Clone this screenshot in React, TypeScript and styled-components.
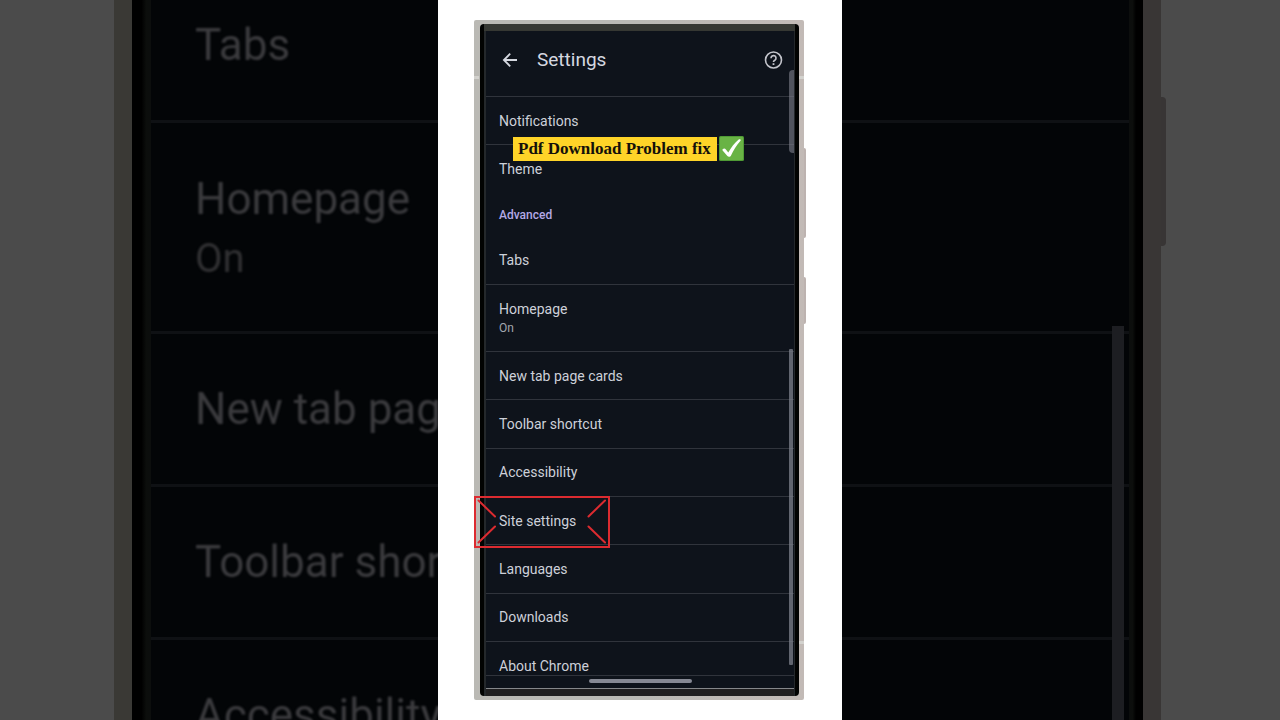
import React from "react";
import styled, { createGlobalStyle } from "styled-components";

const sans = `Roboto, "Liberation Sans", sans-serif`;

const GlobalStyle = createGlobalStyle`
  *, *::before, *::after { box-sizing: border-box; }
  body { margin: 0; background: #4b4b4b; font-family: ${sans}; }
  ul, h1, h2, p { margin: 0; padding: 0; list-style: none; }
`;

const Stage = styled.main`
  display: grid;
  grid-template-columns: minmax(0, 1fr) 404px minmax(0, 1fr);
  height: 100vh;
  min-height: 720px;
  overflow: hidden;
`;

/* ---------- dimmed enlarged phone behind the clip ---------- */

const Backdrop = styled.div`
  display: flex;
  min-width: 0;
  overflow: hidden;
  background: #4b4b4b;
`;

const Wall = styled.div`
  flex: 1;
`;

const BackFrame = styled.div<{ $tone: string }>`
  position: relative;
  flex: none;
  width: 18px;
  background: ${(p) => p.$tone};
`;

const BackKey = styled.span`
  position: absolute;
  left: 18px;
  top: 97px;
  width: 5px;
  height: 149px;
  border-radius: 0 4px 4px 0;
  background: #383535;
`;

const BackBezel = styled.div<{ $side: "left" | "right" }>`
  flex: none;
  width: ${(p) => (p.$side === "left" ? 19 : 14)}px;
  background: linear-gradient(
    to ${(p) => (p.$side === "left" ? "right" : "left")},
    #000 50%,
    #0c0e0c 75%,
    #0c0e0d
  );
`;

const BackScreen = styled.ul`
  position: relative;
  flex: none;
  width: 287px;
  height: 100%;
  overflow: hidden;
  background: #030507;
`;

const BackRow = styled.li<{ $tall?: boolean; $first?: boolean }>`
  display: flex;
  flex-direction: column;
  justify-content: center;
  height: ${(p) => (p.$tall ? 211 : 153)}px;
  margin-top: ${(p) => (p.$first ? -30 : 0)}px;
  padding-left: 44px;
  border-bottom: 3px solid #0f1114;
  white-space: nowrap;
`;

const BackLabel = styled.span`
  font-size: 44px;
  line-height: 64px;
  color: #3b3b3e;
  filter: blur(1px);
`;

const BackHint = styled.span`
  font-size: 40px;
  line-height: 56px;
  color: #313133;
  filter: blur(1px);
`;

const BackScroll = styled.span`
  position: absolute;
  right: 5px;
  top: 326px;
  bottom: 0;
  width: 12px;
  background: #1d1e22;
`;

/* ---------- phone ---------- */

const Clip = styled.section`
  position: relative;
  display: flex;
  flex-direction: column;
  align-items: center;
  padding: 20px 0;
  background: #fff;
`;

const Phone = styled.div`
  position: relative;
  display: flex;
  flex: 1;
  width: 330px;
  margin-left: -2px;
  padding: 4px 5px 4px 6px;
  border-radius: 2px;
  background: linear-gradient(to right, #bab9b4 0, #bab9b4 50%, #c2bab6 100%);
`;

const SideKey = styled.span<{ $top: number; $height: number }>`
  position: absolute;
  left: 330px;
  top: ${(p) => p.$top}px;
  width: 2px;
  height: ${(p) => p.$height}px;
  border-radius: 0 2px 2px 0;
  background: #bdb3b0;
`;

const Antenna = styled.span<{ $side: "left" | "right"; $top: number }>`
  position: absolute;
  ${(p) => p.$side}: 0;
  top: ${(p) => p.$top}px;
  width: 5px;
  height: 3px;
  background: #d3d2ce;
`;

const Bezel = styled.div`
  display: flex;
  flex: 1;
  min-width: 0;
  padding: 0 4px;
  border-radius: 4px;
  background: #020302;
`;

const Glass = styled.div`
  display: flex;
  flex-direction: column;
  flex: 1;
  min-width: 0;
  padding: 7px 1px 0 2px;
  background: linear-gradient(to bottom, #363833 0, #363833 7px, #24282b 7px, #24282b 100%);
`;

const Screen = styled.div`
  position: relative;
  display: flex;
  flex-direction: column;
  flex: 1;
  background: #0e131b;
`;

const Header = styled.header`
  display: flex;
  align-items: center;
  height: 66px;
  padding: 0 11px 7px 14px;
  border-bottom: 1px solid #30343c;
`;

const IconButton = styled.button`
  display: flex;
  padding: 0;
  border: 0;
  background: none;
  color: #d5d8e0;
`;

const Title = styled.h1`
  flex: 1;
  margin-left: 17px;
  font-size: 19px;
  line-height: 24px;
  font-weight: 400;
  color: #d5d8e0;
`;

const List = styled.ul`
  display: flex;
  flex-direction: column;
  flex: 1;
`;

const Item = styled.li<{ $size?: "tall" | "cut"; $plain?: boolean }>`
  position: relative;
  display: flex;
  flex: ${(p) => (p.$size ? "none" : "1 1 48px")};
  height: ${(p) => (p.$size === "tall" ? "67px" : p.$size === "cut" ? "34px" : "auto")};
  overflow: ${(p) => (p.$size === "cut" ? "hidden" : "visible")};
  border-bottom: ${(p) => (p.$plain ? "0" : "1px solid #30343c")};
`;

const ItemLink = styled.a<{ $cut?: boolean }>`
  display: flex;
  flex: 1;
  flex-direction: column;
  justify-content: center;
  height: ${(p) => (p.$cut ? "48px" : "auto")};
  padding-left: 13px;
  text-decoration: none;
  font-size: 14px;
  line-height: 20px;
  color: #cdd0d9;
`;

const Hint = styled.span`
  font-size: 12px;
  line-height: 18px;
  color: #a3a6ae;
`;

const GroupTitle = styled.li`
  display: flex;
  align-items: center;
  height: 43px;
  padding-left: 13px;
  font-size: 12px;
  line-height: 18px;
  font-weight: 500;
  color: #b3a8e6;
`;

const GestureArea = styled.div`
  display: flex;
  justify-content: center;
  height: 13px;
  padding-top: 3px;
  border-bottom: 1px solid #85878a;
`;

const GestureBar = styled.span`
  width: 103px;
  height: 4px;
  border-radius: 2px;
  background: #868994;
`;

const Chin = styled.div`
  height: 7px;
  background: #201f20;
`;

const Thumb = styled.span<{ $wide?: boolean }>`
  position: absolute;
  right: ${(p) => (p.$wide ? 0 : 1)}px;
  top: ${(p) => (p.$wide ? 39 : 318)}px;
  bottom: ${(p) => (p.$wide ? "auto" : "24px")};
  width: ${(p) => (p.$wide ? 5 : 4)}px;
  height: ${(p) => (p.$wide ? "83px" : "auto")};
  border-radius: ${(p) => (p.$wide ? "4px 0 0 4px" : "1px")};
  background: ${(p) => (p.$wide ? "rgba(126, 129, 140, 0.6)" : "rgba(126, 129, 140, 0.75)")};
`;

const Marker = styled.svg`
  position: absolute;
  left: -13px;
  top: -2px;
  width: 137px;
  height: 53px;
`;

const Caption = styled.div`
  position: absolute;
  left: 75px;
  top: 136px;
  display: flex;
  align-items: center;
  gap: 2px;
`;

const CaptionText = styled.p`
  height: 24px;
  padding: 0 6px 0 5px;
  background: #ffd428;
  color: #14100a;
  font-family: "Liberation Serif", serif;
  font-size: 17px;
  line-height: 24px;
  font-weight: 700;
  white-space: nowrap;
`;

const BackIcon = () => (
  <svg width="20" height="20" viewBox="0 0 20 20" fill="none" stroke="currentColor" strokeWidth="1.8">
    <path d="M17 10H4.2M10.2 3.7 3.9 10l6.3 6.3" />
  </svg>
);

const HelpIcon = () => (
  <svg width="20" height="20" viewBox="0 0 20 20" fill="none" stroke="#c3c4cb" strokeWidth="1.6">
    <circle cx="10.500" cy="10" r="8" />
    <path d="M8 8.200a2.500 2.500 0 1 1 4 1.900c-.8.7-1.500 1-1.500 2" />
    <path d="M10.500 13.200v1.800" strokeWidth="1.800" />
  </svg>
);

const CheckIcon = () => (
  <svg width="25" height="25" viewBox="0 0 25 25">
    <rect width="25" height="25" rx="1.500" fill="#4f9a35" />
    <rect x="1" y="1" width="23" height="23" rx="1" fill="#69b345" />
    <path
      d="M3.700 13.300c1-1 2.300-.9 3.200.2l2.400 3.100C12 11.500 15.400 7 19.400 3.700c.8-.6 1.900-.4 2.200 0 .3.500 0 1-.5 1.600-3.700 4-6.600 8.900-9.200 14.400-.6 1.200-2.800 1.300-3.500.2l-4.800-5.300c-.4-.5-.3-.9.100-1.300Z"
      fill="#fff"
    />
  </svg>
);

const TapMarker = () => (
  <Marker viewBox="0 0 137 53" fill="none" stroke="#dc2b30" strokeWidth="2" aria-hidden="true">
    <rect x="2" y="2" width="134" height="50" />
    <path d="M5.500 5.500 22 21.500M5.500 47.500 22 31.500M132 5.500 115.500 21.500M132 47.500 115.500 31.500" strokeLinecap="round" />
  </Marker>
);

const backRows = [
  { label: "Tabs" },
  { label: "Homepage", hint: "On" },
  { label: "New tab page cards" },
  { label: "Toolbar shortcut" },
  { label: "Accessibility" },
];

const BackList = ({ blank }: { blank?: boolean }) => (
  <BackScreen>
    {backRows.map((row, i) => (
      <BackRow key={row.label} $tall={!!row.hint} $first={i === 0}>
        {!blank && <BackLabel>{row.label}</BackLabel>}
        {!blank && row.hint && <BackHint>{row.hint}</BackHint>}
      </BackRow>
    ))}
    {blank && <BackScroll />}
  </BackScreen>
);

type Row = { label: string; hint?: string; marked?: boolean; cut?: boolean; plain?: boolean };

const basics: Row[] = [{ label: "Notifications" }, { label: "Theme", plain: true }];

const advanced: Row[] = [
  { label: "Tabs" },
  { label: "Homepage", hint: "On" },
  { label: "New tab page cards" },
  { label: "Toolbar shortcut" },
  { label: "Accessibility" },
  { label: "Site settings", marked: true },
  { label: "Languages" },
  { label: "Downloads" },
  { label: "About Chrome", cut: true },
];

const SettingsItem = ({ row }: { row: Row }) => (
  <Item $size={row.hint ? "tall" : row.cut ? "cut" : undefined} $plain={row.plain}>
    <ItemLink href="#" $cut={row.cut}>
      {row.label}
      {row.hint && <Hint>{row.hint}</Hint>}
    </ItemLink>
    {row.marked && <TapMarker />}
  </Item>
);

export default function App() {
  return (
    <>
      <GlobalStyle />
      <Stage>
        <Backdrop aria-hidden="true">
          <Wall />
          <BackFrame $tone="#3a3935" />
          <BackBezel $side="left" />
          <BackList />
        </Backdrop>

        <Clip>
          <Phone>
            <Antenna $side="left" $top={56} />
            <Antenna $side="right" $top={56} />
            <Antenna $side="right" $top={621} />
            <SideKey $top={128} $height={90} />
            <SideKey $top={257} $height={47} />
            <Bezel>
              <Glass>
                <Screen>
                  <Header>
                    <IconButton type="button" aria-label="Back">
                      <BackIcon />
                    </IconButton>
                    <Title>Settings</Title>
                    <IconButton type="button" aria-label="Help">
                      <HelpIcon />
                    </IconButton>
                  </Header>
                  <List>
                    {basics.map((row) => (
                      <SettingsItem key={row.label} row={row} />
                    ))}
                    <GroupTitle>Advanced</GroupTitle>
                    {advanced.map((row) => (
                      <SettingsItem key={row.label} row={row} />
                    ))}
                  </List>
                  <GestureArea>
                    <GestureBar />
                  </GestureArea>
                  <Thumb $wide />
                  <Thumb />
                </Screen>
                <Chin />
              </Glass>
            </Bezel>
          </Phone>
          <Caption>
            <CaptionText>Pdf Download Problem fix</CaptionText>
            <CheckIcon />
          </Caption>
        </Clip>

        <Backdrop aria-hidden="true">
          <BackList blank />
          <BackBezel $side="right" />
          <BackFrame $tone="#393635">
            <BackKey />
          </BackFrame>
          <Wall />
        </Backdrop>
      </Stage>
    </>
  );
}
